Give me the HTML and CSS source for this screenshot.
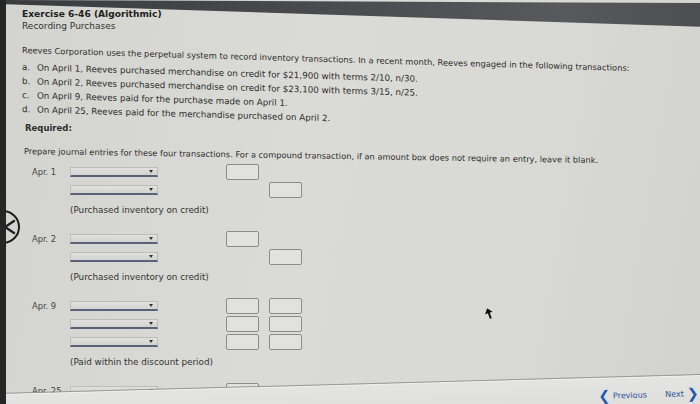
FILE: index.html
```html
<!DOCTYPE html>
<html>
<head>
<meta charset="utf-8">
<link rel="stylesheet" href="styles.css">
</head>
<body>
<div class="screen">
  <div class="topbar"></div>
  <div class="content">
    <div class="title">Exercise 6-46 (Algorithmic)</div>
    <div class="subtitle">Recording Purchases</div>

    <div class="intro">
      <p class="lead">Reeves Corporation uses the perpetual system to record inventory transactions. In a recent month, Reeves engaged in the following transactions:</p>
      <ol class="items">
        <li><span class="mk">a.</span><span>On April 1, Reeves purchased merchandise on credit for $21,900 with terms 2/10, n/30.</span></li>
        <li><span class="mk">b.</span><span>On April 2, Reeves purchased merchandise on credit for $23,100 with terms 3/15, n/25.</span></li>
        <li><span class="mk">c.</span><span>On April 9, Reeves paid for the purchase made on April 1.</span></li>
        <li><span class="mk">d.</span><span>On April 25, Reeves paid for the merchandise purchased on April 2.</span></li>
      </ol>
    </div>

    <div class="required">Required:</div>
    <p class="prompt">Prepare journal entries for these four transactions. For a compound transaction, if an amount box does not require an entry, leave it blank.</p>

    <div class="journal">
      <div class="entry">
        <div class="row"><span class="date">Apr. 1</span><span class="select"></span><span class="box"></span><span class="box hidden"></span></div>
        <div class="row"><span class="date"></span><span class="select"></span><span class="box hidden"></span><span class="box"></span></div>
        <div class="note">(Purchased inventory on credit)</div>
      </div>
      <div class="entry">
        <div class="row"><span class="date">Apr. 2</span><span class="select"></span><span class="box"></span><span class="box hidden"></span></div>
        <div class="row"><span class="date"></span><span class="select"></span><span class="box hidden"></span><span class="box"></span></div>
        <div class="note">(Purchased inventory on credit)</div>
      </div>
      <div class="entry">
        <div class="row"><span class="date">Apr. 9</span><span class="select"></span><span class="box"></span><span class="box"></span></div>
        <div class="row"><span class="date"></span><span class="select"></span><span class="box"></span><span class="box"></span></div>
        <div class="row"><span class="date"></span><span class="select"></span><span class="box"></span><span class="box"></span></div>
        <div class="note">(Paid within the discount period)</div>
      </div>
      <div class="entry">
        <div class="row"><span class="date">Apr. 25</span><span class="select"></span><span class="box"></span><span class="box hidden"></span></div>
      </div>
    </div>
  </div>

  <div class="backbtn">
    <svg width="14" height="16" viewBox="0 0 14 16"><polyline points="12,2 3,8 12,14" fill="none" stroke="#1e1e1e" stroke-width="2.4" stroke-linecap="round" stroke-linejoin="round"/></svg>
  </div>

  <svg class="cursor" width="8" height="11" viewBox="0 0 8 11"><path d="M4 0 L8 5 L5 5 L5 11 L3 11 L3 5 L0 5 Z" fill="#111"/></svg>

  <div class="footer">
    <span class="nav prev"><span class="chev">&#10094;</span>Previous</span>
    <span class="nav next">Next<span class="chev">&#10095;</span></span>
  </div>
</div>
</body>
</html>
```

FILE: styles.css
```css
* { box-sizing: border-box; }
html, body { margin: 0; padding: 0; }
body { background: #d8d8d4; }

.screen {
  position: relative;
  width: 700px;
  height: 404px;
  overflow: hidden;
  background: linear-gradient(100deg, #d3d3cf 0%, #dadad6 40%, #d9d9d5 70%, #d2d2ce 100%);
  border-left: 6px solid #262626;
  font-family: "DejaVu Sans", Verdana, sans-serif;
  color: #2e2e2e;
}

.topbar {
  height: 28px;
  margin-bottom: -24px;
  margin-left: -6px;
  width: 706px;
  background: linear-gradient(90deg, #3a3b3e 0%, #4b4c4f 50%, #58595c 80%, #4c4d50 100%);
  clip-path: polygon(0 0, 706px 3px, 706px 27px, 0 4px);
}

.content { padding-left: 16px; }

.title {
  margin-top: 4px;
  font-size: 9.1px;
  line-height: 12px;
  font-weight: bold;
  color: #222;
}
.subtitle {
  font-size: 9px;
  line-height: 12px;
  color: #333;
}

.intro {
  margin-top: 12px;
  transform: skewY(1.7deg);
  transform-origin: 0 0;
}
.lead {
  margin: 0;
  font-size: 8.3px;
  line-height: 12px;
}
.items {
  list-style: none;
  margin: 4px 0 0;
  padding: 0;
  font-size: 8.7px;
  line-height: 14px;
}
.items li { display: flex; }
.items .mk { width: 15px; flex: none; }

.required {
  margin-top: 6px;
  margin-left: 3px;
  font-size: 8.5px;
  line-height: 12px;
  font-weight: bold;
}
.prompt {
  margin: 11px 0 0 2px;
  font-size: 8.25px;
  line-height: 12px;
  transform: skewY(0.9deg);
  transform-origin: 0 0;
}

.journal { margin-top: 6px; }
.entry { margin-bottom: 10px; }
.row {
  display: flex;
  align-items: center;
  height: 18px;
  padding-left: 10px;
}
.date {
  width: 38px;
  flex: none;
  font-size: 8.3px;
  color: #444;
}
.select {
  position: relative;
  width: 88px;
  height: 10px;
  flex: none;
  background: linear-gradient(#e0e0de, #d3d3d1);
  border: 1px solid #bdbdbb;
  border-bottom: 2px solid #59627a;
}
.select::after {
  content: "";
  position: absolute;
  right: 4px;
  top: 2px;
  border-left: 2px solid transparent;
  border-right: 2px solid transparent;
  border-top: 3px solid #333;
}
.box {
  width: 33px;
  height: 16px;
  flex: none;
  border: 1.5px solid #8c8c8a;
  border-radius: 2px;
  background: #e1e1df;
}
.select + .box { margin-left: 68px; }
.box + .box { margin-left: 10px; }
.box.hidden { visibility: hidden; }

.note {
  margin-top: 1px;
  margin-left: 48px;
  height: 20px;
  line-height: 20px;
  font-size: 8.8px;
  color: #333;
}

.backbtn {
  position: absolute;
  left: -20px;
  top: 210px;
  width: 34px;
  height: 34px;
  border: 2px solid #1e1e1e;
  border-radius: 50%;
  display: flex;
  align-items: center;
  justify-content: flex-end;
  padding-right: 2px;
}

.cursor {
  position: absolute;
  left: 479px;
  top: 308px;
  transform: rotate(-20deg);
}

.footer {
  position: absolute;
  left: -6px;
  top: 393px;
  width: 720px;
  height: 50px;
  transform: rotate(-1.55deg);
  transform-origin: 0 0;
  background: linear-gradient(#e4e4e2, #dadad8);
  border-top: 1px solid #979795;
  box-shadow: inset 0 1px 0 #f0f0ee;
  font-size: 8px;
  color: #2b4f94;
}
.nav {
  position: absolute;
  top: 10px;
  display: flex;
  align-items: center;
  gap: 3px;
}
.prev { left: 598px; }
.next { left: 665px; }
.chev {
  font-size: 14px;
  color: #2457b0;
  font-weight: bold;
}
```
